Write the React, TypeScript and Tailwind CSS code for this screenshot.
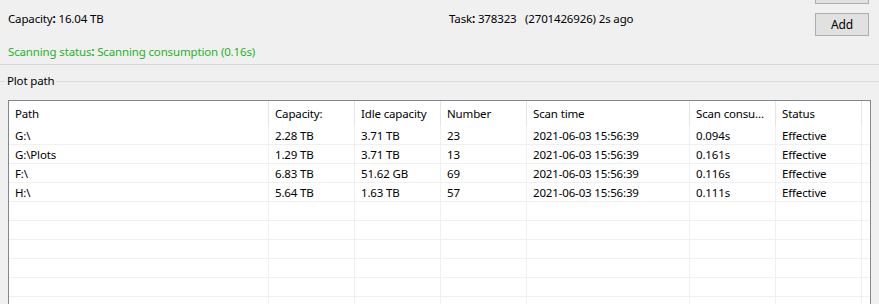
import React from "react";

type Row = {
  path: string;
  capacity: string;
  idle: string;
  number: string;
  scanTime: string;
  consumption: string;
  status: string;
};

const rows: Row[] = [
  { path: "G:\\", capacity: "2.28 TB", idle: "3.71 TB", number: "23", scanTime: "2021-06-03 15:56:39", consumption: "0.094s", status: "Effective" },
  { path: "G:\\Plots", capacity: "1.29 TB", idle: "3.71 TB", number: "13", scanTime: "2021-06-03 15:56:39", consumption: "0.161s", status: "Effective" },
  { path: "F:\\", capacity: "6.83 TB", idle: "51.62 GB", number: "69", scanTime: "2021-06-03 15:56:39", consumption: "0.116s", status: "Effective" },
  { path: "H:\\", capacity: "5.64 TB", idle: "1.63 TB", number: "57", scanTime: "2021-06-03 15:56:39", consumption: "0.111s", status: "Effective" },
];

const EMPTY_ROWS = 6;

const columns: { label: string; width: string; key: keyof Row }[] = [
  { label: "Path", width: "w-[260px]", key: "path" },
  { label: "Capacity:", width: "w-[86px]", key: "capacity" },
  { label: "Idle capacity", width: "w-[86px]", key: "idle" },
  { label: "Number", width: "w-[86px]", key: "number" },
  { label: "Scan time", width: "w-[163px]", key: "scanTime" },
  { label: "Scan consu...", width: "w-[86px]", key: "consumption" },
  { label: "Status", width: "w-[86px]", key: "status" },
];

function WinButton({ children }: { children?: React.ReactNode }) {
  return (
    <button
      type="button"
      className="h-[23px] w-[54px] border border-[#adadad] bg-[#e1e1e1] text-[12px] leading-none text-black"
    >
      {children}
    </button>
  );
}

function DataRow({ row }: { row?: Row }) {
  return (
    <div className="flex h-[19px] border-b border-[#f0f0f0]">
      {columns.map((col) => (
        <div
          key={col.key}
          className={`${col.width} shrink-0 truncate border-r border-[#f0f0f0] pl-[6px] pt-[2px] leading-[16px]`}
        >
          {row ? row[col.key] : ""}
        </div>
      ))}
      <div className="flex-1" />
    </div>
  );
}

export default function App() {
  return (
    <div
      className="h-[304px] w-[879px] overflow-hidden bg-[#f0f0f0] text-[11.5px] tracking-[-0.15px] text-black"
      style={{ fontFamily: '"Noto Sans", "Open Sans", sans-serif' }}
    >
      <div className="flex h-[65px] items-start border-b border-[#d7d7d7] pl-2">
        <div className="w-[441px] pt-[11px]">
          <p className="leading-[16px]">
            Capacity<b>:</b> 16.04 TB
          </p>
          <p className="mt-[17px] leading-[16px] text-[#25b425]">
            Scanning status<b>:</b> Scanning consumption (0.16s)
          </p>
        </div>
        <div className="pt-[11px] leading-[16px]">
          Task<b>:</b> 378323&nbsp;&nbsp;&nbsp;(2701426926) 2s ago
        </div>
        <div className="ml-auto mr-[10px] -mt-[19px] flex flex-col gap-[9px]">
          <WinButton />
          <WinButton>Add</WinButton>
        </div>
      </div>

      <div className="mt-[8px] flex h-[16px] items-center">
        <span className="h-px w-[5px] bg-[#dcdcdc]" />
        <span className="px-[2px] leading-[16px]">Plot path</span>
        <span className="h-px flex-1 bg-[#dcdcdc]" />
      </div>

      <div className="ml-[8px] mt-[11px] h-[220px] w-[863px] border border-[#828790] bg-white">
        <div className="flex h-[25px]">
          {columns.map((col) => (
            <div
              key={col.key}
              className={`${col.width} shrink-0 truncate border-r border-[#e5e5e5] pl-[6px] pt-[5px] leading-[16px]`}
            >
              {col.label}
            </div>
          ))}
          <div className="flex-1" />
        </div>
        {rows.map((r) => (
          <DataRow key={r.path} row={r} />
        ))}
        {Array.from({ length: EMPTY_ROWS }).map((_, i) => (
          <DataRow key={`empty-${i}`} />
        ))}
      </div>
    </div>
  );
}
